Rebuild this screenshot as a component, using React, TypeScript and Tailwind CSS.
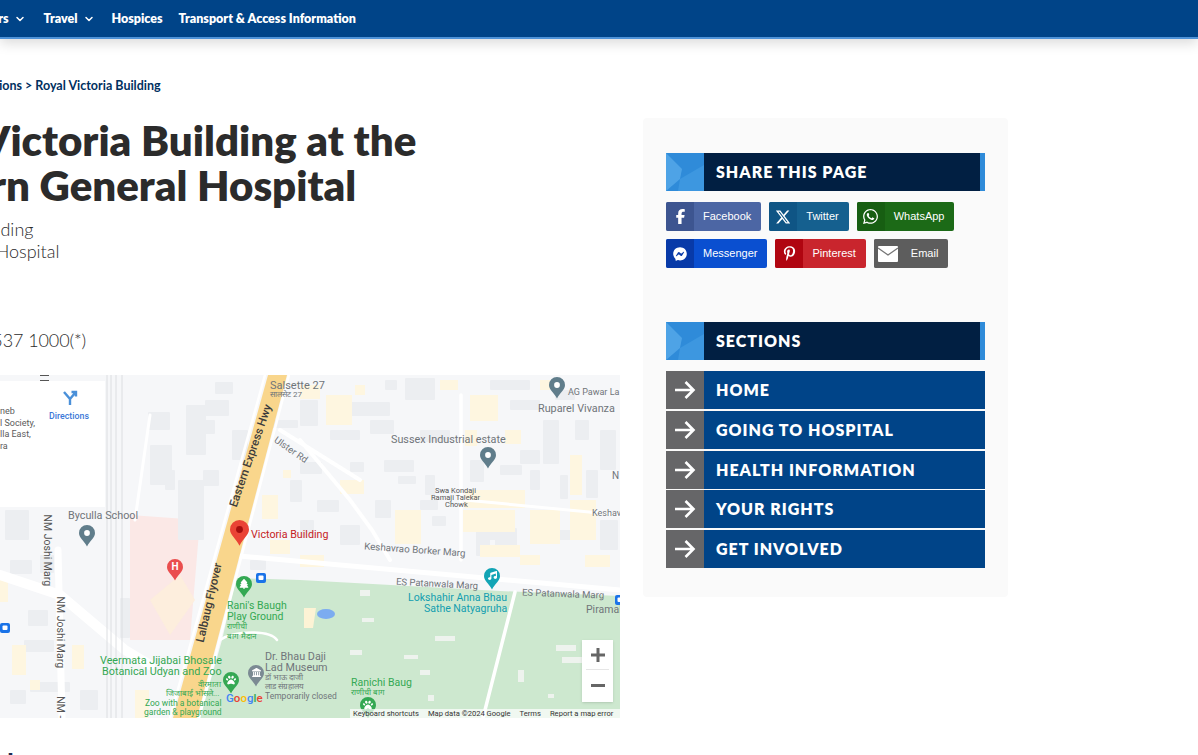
import { FaFacebookF, FaXTwitter, FaWhatsapp, FaFacebookMessenger, FaPinterestP, FaPaw, FaTree, FaLandmark, FaMusic } from "react-icons/fa6";
import { ChevronDown } from "lucide-react";
import type { ReactNode } from "react";

const lato = "font-['Lato','Open_Sans',sans-serif]";

const EnvelopeIcon = () => (
  <svg width="20" height="16" viewBox="0 0 20 16">
    <rect width="20" height="16" rx="1" fill="#fff" />
    <path d="M0 2l10 7 10-7" fill="none" stroke="#777" strokeWidth="1.4" />
  </svg>
);

const shareRows: { label: string; icon: ReactNode; bg: string; iconBg: string }[][] = [
  [
    { label: "Facebook", icon: <FaFacebookF size={15} />, bg: "bg-[#4c66a4]", iconBg: "bg-[#3d5590]" },
    { label: "Twitter", icon: <FaXTwitter size={16} />, bg: "bg-[#15608f]", iconBg: "bg-[#0f5585]" },
    { label: "WhatsApp", icon: <FaWhatsapp size={17} />, bg: "bg-[#1c6a17]", iconBg: "bg-[#175e12]" },
  ],
  [
    { label: "Messenger", icon: <FaFacebookMessenger size={14} />, bg: "bg-[#0a4fd0]", iconBg: "bg-[#083aa8]" },
    { label: "Pinterest", icon: <FaPinterestP size={15} />, bg: "bg-[#c9252d]", iconBg: "bg-[#b00510]" },
    { label: "Email", icon: <EnvelopeIcon />, bg: "bg-[#5d5d5d]", iconBg: "bg-[#5d5d5d]" },
  ],
];

const sections = ["HOME", "GOING TO HOSPITAL", "HEALTH INFORMATION", "YOUR RIGHTS", "GET INVOLVED"];

const SideHeading = ({ title }: { title: string }) => (
  <div className="flex h-[38px] w-[319px] items-stretch bg-[#011f42]">
    <svg width="38" height="38" viewBox="0 0 38 38" className="shrink-0">
      <rect width="38" height="38" fill="#2f8bd9" />
      <polygon points="0,0 16,16 14,26 0,38" fill="#4ea3e6" />
      <polygon points="14,26 38,12 38,38 12,38" fill="#3d97e0" />
    </svg>
    <h3 className={`${lato} flex-1 pl-[12px] text-[16px] leading-[37px] font-extrabold tracking-[1px] text-white`}>{title}</h3>
    <div className="w-[5px] bg-[#2f8bd9]" />
  </div>
);

const SectionLink = ({ title }: { title: string }) => (
  <a className="flex h-[38px] w-[319px] items-stretch bg-[#004488]">
    <span className="flex w-[38px] items-center justify-center bg-[#666668]">
      <svg width="22" height="20" viewBox="0 0 22 20" fill="none" stroke="#fff" strokeWidth="2.6">
        <path d="M1 10h19M11.5 2l8 8-8 8" />
      </svg>
    </span>
    <span className={`${lato} pl-[12px] text-[16px] leading-[38px] font-extrabold tracking-[1px] text-white`}>{title}</span>
  </a>
);

// rough building footprints for the map, in page coordinates
const grayBlocks = [
  [186, 405, 20, 50], [215, 382, 18, 12], [205, 400, 24, 16], [150, 445, 22, 40], [178, 480, 26, 60], [165, 470, 10, 20],
  [232, 430, 16, 30], [148, 412, 22, 18], [195, 420, 20, 14], [203, 470, 16, 16], [300, 400, 18, 26], [350, 402, 40, 14],
  [405, 378, 30, 22], [370, 420, 24, 14], [420, 430, 30, 12], [490, 380, 40, 10], [510, 400, 30, 10], [543, 420, 16, 44],
  [520, 450, 20, 14], [575, 420, 14, 20], [600, 430, 16, 40], [586, 470, 12, 28], [480, 530, 30, 10], [476, 530, 14, 26],
  [495, 528, 22, 26], [420, 500, 18, 10], [432, 516, 14, 10], [375, 500, 16, 18], [384, 460, 30, 12], [300, 462, 22, 12],
  [317, 500, 22, 12], [5, 510, 24, 30], [40, 555, 14, 18], [10, 560, 22, 14], [24, 640, 30, 12], [30, 682, 40, 10],
  [80, 690, 18, 20], [120, 598, 10, 40], [385, 380, 12, 10], [555, 390, 20, 10], [552, 530, 34, 10],
  [600, 520, 18, 30], [250, 560, 16, 10], [330, 430, 30, 10], [272, 420, 26, 8],
  [425, 475, 10, 20], [398, 476, 18, 8], [350, 462, 14, 10], [290, 480, 12, 22], [300, 520, 14, 18], [340, 525, 20, 20],
  [530, 470, 10, 20], [560, 475, 8, 24], [470, 460, 14, 22], [500, 465, 22, 10], [28, 610, 20, 16], [10, 690, 16, 14],
];

const yellowBlocks = [
  [326, 395, 26, 30], [470, 395, 28, 26], [465, 430, 12, 16], [505, 430, 16, 14], [465, 490, 60, 18], [463, 510, 52, 22],
  [395, 510, 26, 34], [340, 480, 24, 14], [570, 455, 12, 40], [530, 510, 30, 34], [570, 500, 26, 40], [262, 495, 16, 24],
  [270, 540, 20, 14], [300, 385, 20, 14], [12, 645, 14, 30], [72, 645, 12, 24], [30, 680, 10, 10], [480, 545, 40, 12],
  [585, 555, 25, 12], [520, 555, 20, 10], [300, 555, 24, 12], [0, 580, 8, 22], [135, 690, 14, 28], [355, 385, 10, 10],
  [283, 470, 8, 8], [440, 380, 18, 10], [540, 380, 10, 10],
];

const parkBlocks = [
  [360, 590, 10, 6], [362, 618, 12, 4], [435, 636, 20, 5], [350, 650, 12, 5], [404, 655, 14, 4], [420, 670, 10, 5],
  [556, 645, 20, 6], [562, 657, 20, 6], [518, 670, 6, 12], [428, 695, 6, 6], [548, 694, 6, 4],
];

const MapPin = ({ color, size = 16, dot = "#fff", children }: { color: string; size?: number; dot?: string; children?: ReactNode }) => (
  <div className="relative">
    <svg width={size} height={size * 1.35} viewBox="0 0 20 27" className="block">
      <path d="M10 0a10 10 0 0 1 10 10c0 6-6 9-10 17C6 19 0 16 0 10A10 10 0 0 1 10 0z" fill={color} />
      {!children && <circle cx="10" cy="10" r="3.6" fill={dot} />}
    </svg>
    {children && (
      <span className="absolute inset-x-0 top-[3px] flex justify-center text-white">{children}</span>
    )}
  </div>
);

const BusStop = () => (
  <svg width="10" height="10" viewBox="0 0 10 10" className="block">
    <rect width="10" height="10" rx="2" fill="#1a73e8" />
    <rect x="2.5" y="2.5" width="5" height="4.5" rx="1" fill="#fff" />
  </svg>
);

type Label = { text: string; cls: string };

// text on the map sits at its own place on the canvas
const mapLabels: Label[] = [
  { text: "Salsette 27", cls: "left-[270px] top-[5px] text-[11px] text-[#70757a]" },
  { text: "सालसेट 27", cls: "left-[270px] top-[16px] text-[8px] text-[#70757a]" },
  { text: "Eastern Express Hwy", cls: "left-[197px] top-[75px] rotate-[-71deg] text-[11.5px] font-medium text-[#3c3c3c]" },
  { text: "Ulster Rd", cls: "left-[272px] top-[70px] rotate-[35deg] text-[9.5px] text-[#70757a]" },
  { text: "AG Pawar La", cls: "left-[568px] top-[13px] text-[9px] text-[#70757a]" },
  { text: "Ruparel Vivanza", cls: "left-[538px] top-[29px] text-[10.8px] text-[#70757a]" },
  { text: "Sussex Industrial estate", cls: "left-[391px] top-[60px] text-[10.8px] text-[#70757a]" },
  { text: "Swa Kondaji", cls: "left-[435px] top-[112px] text-[7.5px] text-[#555]" },
  { text: "Ramaji Talekar", cls: "left-[431px] top-[119px] text-[7.5px] text-[#555]" },
  { text: "Chowk", cls: "left-[445px] top-[126px] text-[7.5px] text-[#555]" },
  { text: "N", cls: "left-[612px] top-[96px] text-[10px] text-[#70757a]" },
  { text: "Keshav", cls: "left-[592px] top-[134px] text-[9px] text-[#70757a]" },
  { text: "Keshavrao Borker Marg", cls: "left-[364px] top-[170px] rotate-[4deg] text-[9.8px] text-[#70757a]" },
  { text: "Victoria Building", cls: "left-[251px] top-[155px] text-[10.7px] text-[#c5221f]" },
  { text: "Byculla School", cls: "left-[68px] top-[136px] text-[10.8px] text-[#70757a]" },
  { text: "NM Joshi Marg", cls: "left-[11px] top-[170px] rotate-90 text-[10.5px] text-[#555]" },
  { text: "NM Joshi Marg", cls: "left-[24px] top-[252px] rotate-90 text-[10.5px] text-[#555]" },
  { text: "NM -", cls: "left-[49px] top-[327px] rotate-90 text-[10.5px] text-[#555]" },
  { text: "Lalbaug Flyover", cls: "left-[169px] top-[222px] rotate-[-77deg] text-[11.5px] font-medium text-[#3c3c3c]" },
  { text: "ES Patanwala Marg", cls: "left-[396px] top-[204px] rotate-[3deg] text-[9.5px] text-[#70757a]" },
  { text: "ES Patanwala Marg", cls: "left-[522px] top-[214px] rotate-[2deg] text-[9.5px] text-[#70757a]" },
  { text: "Lokshahir Anna Bhau", cls: "left-[408px] top-[218px] text-[10.5px] text-[#129eaf]" },
  { text: "Sathe Natyagruha", cls: "left-[424px] top-[229px] text-[10.5px] text-[#129eaf]" },
  { text: "Piramal", cls: "left-[586px] top-[230px] text-[10.5px] text-[#70757a]" },
  { text: "Rani's Baugh", cls: "left-[227px] top-[226px] text-[10.5px] text-[#34a853]" },
  { text: "Play Ground", cls: "left-[227px] top-[237px] text-[10.5px] text-[#34a853]" },
  { text: "राणीची", cls: "left-[227px] top-[248px] text-[8px] text-[#34a853]" },
  { text: "बाग मैदान", cls: "left-[227px] top-[258px] text-[8px] text-[#34a853]" },
  { text: "Veermata Jijabai Bhosale", cls: "left-[100px] top-[281px] text-[10.8px] text-[#34a853]" },
  { text: "Botanical Udyan and Zoo", cls: "left-[102px] top-[292px] text-[10.8px] text-[#34a853]" },
  { text: "वीरमाता", cls: "left-[198px] top-[306px] text-[8px] text-[#34a853]" },
  { text: "जिजाबाई भोसले...", cls: "left-[166px] top-[315px] text-[8px] text-[#34a853]" },
  { text: "Zoo with a botanical", cls: "left-[145px] top-[324px] text-[8.5px] text-[#34a853]" },
  { text: "garden & playground", cls: "left-[144px] top-[333px] text-[8.5px] text-[#34a853]" },
  { text: "Dr. Bhau Daji", cls: "left-[265px] top-[277px] text-[10.8px] text-[#70757a]" },
  { text: "Lad Museum", cls: "left-[265px] top-[288px] text-[10.8px] text-[#70757a]" },
  { text: "डॉ भाऊ दाजी", cls: "left-[265px] top-[299px] text-[8px] text-[#70757a]" },
  { text: "लाड संग्रहालय", cls: "left-[265px] top-[308px] text-[8px] text-[#70757a]" },
  { text: "Temporarily closed", cls: "left-[265px] top-[317px] text-[8.5px] text-[#70757a]" },
  { text: "Ranichi Baug", cls: "left-[351px] top-[303px] text-[10.5px] text-[#34a853]" },
  { text: "राणीची बाग", cls: "left-[351px] top-[314px] text-[8px] text-[#34a853]" },
];

const GoogleMap = () => (
  <div className="relative h-[343px] w-[760px] overflow-hidden bg-[#f6f7f9] [font-family:Roboto,sans-serif]">
    {/* the map tiles, shifted right because the column starts off screen */}
    <svg width="760" height="343" viewBox="-140 375 760 343" className="absolute inset-0">
      <polygon points="130,515 200,520 190,640 130,640" fill="#fbe8e6" />
      <polygon points="150,600 180,575 195,600 170,635" fill="#fdeedd" />
      {grayBlocks.map(([x, y, w, h], i) => (
        <rect key={i} x={x} y={y} width={w} height={h} rx="1" fill="#eceef1" />
      ))}
      {yellowBlocks.map(([x, y, w, h], i) => (
        <rect key={i} x={x} y={y} width={w} height={h} fill="#fef6e0" />
      ))}
      <polygon points="236,578 300,580 500,591 620,596 620,718 200,718 222,640" fill="#cde8cf" />
      {parkBlocks.map(([x, y, w, h], i) => (
        <rect key={i} x={x} y={y} width={w} height={h} fill="#eef3ee" />
      ))}
      <ellipse cx="326" cy="614" rx="9" ry="5" fill="#7cacf0" />
      <polygon points="304,608 316,608 313,628 304,628" fill="#fdf3d5" />
      <g fill="none" stroke="#fff" strokeLinecap="round">
        <path d="M228 555L620 590" strokeWidth="5" />
        <path d="M0 575L60 595L125 650L150 665" strokeWidth="10" />
        <path d="M58 550L62 718" strokeWidth="7" />
        <path d="M515 592L483 718" strokeWidth="3.5" />
        <path d="M461 395V560" strokeWidth="3.5" />
        <path d="M300 440L350 500L372 530L390 560" strokeWidth="4" />
        <path d="M280 430L360 480" strokeWidth="4" />
        <path d="M465 500L620 515" strokeWidth="3" />
        <path d="M220 640C235 630 270 630 277 640" strokeWidth="2.5" />
        <path d="M150 415L135 520" strokeWidth="3" />
      </g>
      <g fill="none" stroke="#dcdee1" strokeWidth="1">
        <path d="M107 375V718M111 375V718M116 375V718M122 375V718" />
      </g>
      <polygon points="268,375 287,375 197,718 173,718" fill="#f9d68c" />
      <path d="M289 375L199 718" stroke="#fff" strokeWidth="2.5" />
      <path d="M265 375L170 718" stroke="#fff" strokeWidth="2.5" />
    </svg>

    <div className="absolute left-[140px] top-0 h-[343px] w-[620px]">
      {mapLabels.map((label) => (
        <span key={label.text + label.cls} className={`absolute leading-none whitespace-nowrap ${label.cls}`}>
          {label.text}
        </span>
      ))}

      {/* place card */}
      <div className="absolute left-0 top-[6px] h-[126px] w-[105px] bg-white">
        <div className="absolute left-0 top-[25px] text-[9px] leading-[11.5px] whitespace-nowrap text-[#5b5b5b]">
          <p>neb</p>
          <p>l Society,</p>
          <p>lla East,</p>
          <p>ra</p>
        </div>
        <svg width="16" height="16" viewBox="0 0 16 16" className="absolute left-[62px] top-[9px]" fill="none" stroke="#4a90d9" strokeWidth="2.4">
          <path d="M8 15V9L2 2M8 9l5-6M9.5 2H14v4.5" />
        </svg>
        <span className="absolute left-[49px] top-[31px] text-[8.8px] leading-none font-medium whitespace-nowrap text-[#3b78d8]">Directions</span>
      </div>
      <div className="absolute left-[40px] top-[0px] h-[6px] w-[9px] border-y border-[#555]" />

      <div className="absolute left-[230px] top-[145px]"><MapPin color="#ea4335" size={19} dot="#a50e0e" /></div>
      <div className="absolute left-[79px] top-[150px]"><MapPin color="#607d8b" /></div>
      <div className="absolute left-[549px] top-[2px]"><MapPin color="#607d8b" /></div>
      <div className="absolute left-[480px] top-[72px]"><MapPin color="#607d8b" /></div>
      <div className="absolute left-[167px] top-[184px]">
        <MapPin color="#ea4e4e"><span className="text-[10px] leading-none font-bold">H</span></MapPin>
      </div>
      <div className="absolute left-[236px] top-[201px]"><MapPin color="#34a853"><FaTree size={10} /></MapPin></div>
      <div className="absolute left-[484px] top-[193px]"><MapPin color="#12a4b5"><FaMusic size={9} /></MapPin></div>
      <div className="absolute left-[248px] top-[290px]"><MapPin color="#7b8a93"><FaLandmark size={9} /></MapPin></div>
      <div className="absolute left-[223px] top-[297px]"><MapPin color="#34a853"><FaPaw size={10} /></MapPin></div>
      <div className="absolute left-[360px] top-[322px]"><MapPin color="#34a853"><FaPaw size={10} /></MapPin></div>
      <div className="absolute left-[256px] top-[198px]"><BusStop /></div>
      <div className="absolute left-[0px] top-[248px]"><BusStop /></div>
      <div className="absolute left-[615px] top-[220px]"><BusStop /></div>

      <span className="absolute left-[226px] top-[318px] text-[11.5px] leading-none font-medium">
        <span className="text-[#4285f4]">G</span>
        <span className="text-[#ea4335]">o</span>
        <span className="text-[#fbbc05]">o</span>
        <span className="text-[#4285f4]">g</span>
        <span className="text-[#34a853]">l</span>
        <span className="text-[#ea4335]">e</span>
      </span>

      {/* zoom control */}
      <div className="absolute left-[582px] top-[265px] flex h-[62px] w-[31px] flex-col items-center bg-white shadow-sm">
        <span className="flex h-[30px] w-[23px] items-center justify-center border-b border-[#e6e6e6] text-[#666]">
          <svg width="14" height="14" viewBox="0 0 14 14"><path d="M5.5 0h3v5.5H14v3H8.5V14h-3V8.5H0v-3h5.5z" fill="currentColor" /></svg>
        </span>
        <span className="flex h-[31px] items-center justify-center text-[#666]">
          <svg width="14" height="3" viewBox="0 0 14 3"><rect width="14" height="3" fill="currentColor" /></svg>
        </span>
      </div>

      {/* attribution */}
      <div className="absolute bottom-0 left-[350px] flex h-[9px] w-[270px] items-center gap-[9px] bg-white/70 pl-[3px] text-[7.6px] leading-none whitespace-nowrap text-[#333]">
        <span>Keyboard shortcuts</span>
        <span>Map data ©2024 Google</span>
        <span>Terms</span>
        <span>Report a map error</span>
      </div>
    </div>
  </div>
);

export default function App() {
  return (
    <div className={`${lato} h-[755px] w-[1198px] overflow-hidden bg-white`}>
      <nav className="relative h-[39px] border-b-2 border-[#4f93d8] bg-[#004488] shadow-[0_4px_12px_rgba(0,0,0,0.15)]">
        <ul className="ml-[-35px] flex h-[37px] items-center pt-[1px] text-[12.5px] font-extrabold text-white">
          <li className="flex items-center gap-[6px]">Visitors<ChevronDown size={12} strokeWidth={3} /></li>
          <li className="ml-[17px] flex items-center gap-[6px]">Travel<ChevronDown size={12} strokeWidth={3} /></li>
          <li className="ml-[16px]">Hospices</li>
          <li className="ml-[16px]">Transport &amp; Access Information</li>
        </ul>
      </nav>

      <main className="flex">
        <div className="ml-[-140px] w-[760px] shrink-0 pt-[38px]">
          <p className="ml-[-25px] text-[12.5px] leading-[18px] font-bold text-[#00305f]">Hospital Locations and Directions &gt; Royal Victoria Building</p>
          <h1 className="mt-[23px] ml-[8px] text-[42px] leading-[45px] font-extrabold text-[#2b2b2b]">
            Royal Victoria Building at the
            <br />
            Western General Hospital
          </h1>
          <div className="mt-[10px] text-[18px] leading-[22px] font-light text-[#2b2b2b]">
            <p className="ml-[1px]">Royal Victoria Building</p>
            <p className="ml-[-1px]">Western General Hospital</p>
          </div>
          <p className="mt-[67px] ml-[-2px] text-[18px] leading-[22px] font-light tracking-[-0.1px] text-[#2b2b2b]">Telephone: 0131 537 1000(*)</p>
          <div className="mt-[24px]">
            <GoogleMap />
          </div>
          <h2 className="mt-[28px] ml-[86px] text-[28px] leading-[34px] font-bold text-[#1c2a4f]">Wards</h2>
        </div>

        <aside className="ml-[23px] mt-[79px] h-[479px] w-[365px] shrink-0 rounded-[4px] bg-[#fafafa] pl-[23px] pt-[35px]">
          <SideHeading title="SHARE THIS PAGE" />
          <div className="mt-[11px] flex flex-col gap-[8px]">
            {shareRows.map((row, i) => (
              <div key={i} className="flex gap-[8px]">
                {row.map((item) => (
                  <a
                    key={item.label}
                    className={`flex h-[29px] items-stretch overflow-hidden rounded-[2px] pr-[10px] text-[11px] text-white [font-family:'Liberation_Sans',sans-serif] ${item.bg}`}
                  >
                    <span className={`flex w-[28px] items-center justify-center ${item.iconBg}`}>{item.icon}</span>
                    <span className="ml-[9px] leading-[29px]">{item.label}</span>
                  </a>
                ))}
              </div>
            ))}
          </div>
          <div className="mt-[54px]">
            <SideHeading title="SECTIONS" />
          </div>
          <div className="mt-[11px] flex flex-col gap-[1.75px]">
            {sections.map((s) => (
              <SectionLink key={s} title={s} />
            ))}
          </div>
        </aside>
      </main>
    </div>
  );
}
